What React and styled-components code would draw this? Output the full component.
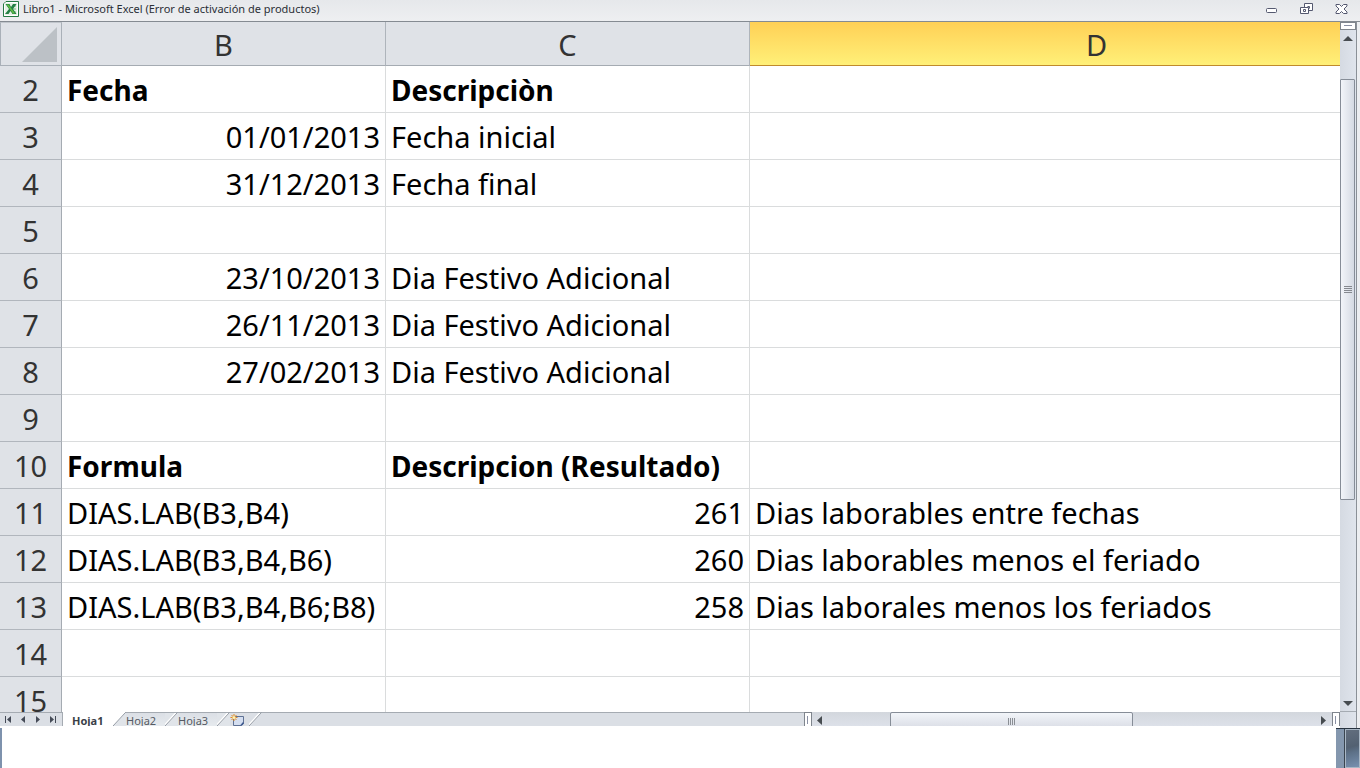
import React from 'react';
import styled, { createGlobalStyle } from 'styled-components';

const GlobalStyle = createGlobalStyle`
  * { box-sizing: border-box; }
  html, body { margin: 0; background: #fff; }
  button { font: inherit; padding: 0; border: 0; background: none; color: inherit; }
`;

const Window = styled.div`
  display: flex;
  flex-direction: column;
  height: 100vh;
  overflow: hidden;
  font-family: "Noto Sans", "Open Sans", sans-serif;
  color: #000;
`;

const TitleBar = styled.header`
  display: flex;
  align-items: center;
  flex: none;
  height: 22px;
  padding: 0 11px 3px 3px;
  border-bottom: 1px solid #858b92;
  background: linear-gradient(#e6e8eb, #eeeff1);
`;

const Title = styled.h1`
  flex: 1;
  margin: 0 0 0 4px;
  font-size: 11px;
  line-height: 16px;
  font-weight: 400;
  color: #2b2f36;
  white-space: nowrap;
`;

const WindowControls = styled.div`
  display: flex;
  gap: 20px;
`;

const ControlButton = styled.button`
  display: grid;
  place-items: center;
  width: 15px;
  height: 14px;
`;

const Workspace = styled.main`
  display: flex;
  flex: 1;
  min-height: 0;
`;

const SheetColumn = styled.div`
  display: flex;
  flex-direction: column;
  flex: 1;
  min-width: 0;
  padding-bottom: 2px;
`;

const SheetViewport = styled.div`
  flex: 1;
  min-height: 0;
  overflow: hidden;
`;

const Sheet = styled.table`
  width: max(100%, 1444px);
  table-layout: fixed;
  border-collapse: separate;
  border-spacing: 0;
`;

const Col = styled.col`
  width: ${(p) => (p.$width ? `${p.$width}px` : 'auto')};
`;

const ColumnHeader = styled.th`
  height: 44px;
  padding: 2px 0 0;
  font-size: 29px;
  line-height: 40px;
  font-weight: 400;
  color: #333;
  border-right: 1px solid ${(p) => (p.$active ? '#ffe56b' : '#aeb4bb')};
  border-bottom: 1px solid ${(p) => (p.$active ? '#c08a2c' : '#a5abb2')};
  background: ${(p) => (p.$active ? 'linear-gradient(#ffd056, #fff078)' : '#dfe2e7')};
`;

const Corner = styled.td`
  height: 44px;
  padding: 4px 4px 3px 0;
  border: 1px solid #a9b0b8;
  border-top-color: #c0c5cb;
  background: #dfe2e7;
  line-height: 0;
  text-align: right;
`;

const RowHeader = styled.th`
  height: 47px;
  padding: 2px 0 0;
  font-size: 29px;
  line-height: 42px;
  font-weight: 400;
  color: #333;
  border-right: 1px solid #a5abb2;
  border-bottom: 1px solid #b1b6bd;
  background: #dfe2e7;
`;

const Cell = styled.td`
  height: 47px;
  padding: 2px 5px 0;
  font-size: ${(p) => (p.$bold ? 28 : 29)}px;
  line-height: 42px;
  font-weight: ${(p) => (p.$bold ? 700 : 400)};
  text-align: ${(p) => (p.$right ? 'right' : 'left')};
  white-space: nowrap;
  border-right: 1px solid #dadcdd;
  border-bottom: 1px solid #dadcdd;

  &:last-child { border-right: 0; }
`;

const BottomBar = styled.div`
  display: flex;
  flex: none;
  height: 14px;
  overflow: hidden;
  background: #dbdfe5;
`;

const SheetNav = styled.div`
  display: flex;
  align-items: center;
  justify-content: center;
  gap: 6px;
  width: 63px;
  border-top: 1px solid #a5abb2;
  border-right: 1px solid #a5abb2;
`;

const NavButton = styled.button`
  display: flex;
  width: 9px;
  height: 9px;
`;

const Tabs = styled.nav`
  display: flex;
  flex: 1;
`;

const Tab = styled.button`
  flex: none;
  width: ${(p) => (p.$active ? 50 : 39)}px;
  padding-left: ${(p) => (p.$active ? 9 : 0)}px;
  font-size: 11px;
  line-height: 16px;
  font-weight: ${(p) => (p.$active ? 700 : 400)};
  text-align: left;
  color: ${(p) => (p.$active ? '#3b3f48' : '#555a63')};
  border-top: 1px solid ${(p) => (p.$active ? '#fff' : '#a5abb2')};
  background: ${(p) => (p.$active ? '#fff' : 'linear-gradient(#dbdfe5, #e6eaee)')};
`;

const NewTab = styled.button`
  flex: none;
  width: 19px;
  border-top: 1px solid #a5abb2;
  line-height: 0;
  text-align: left;
`;

const TabFiller = styled.div`
  flex: 1;
  border-top: 1px solid #a5abb2;
`;

const SlantSvg = styled.svg`
  flex: none;
  width: 13px;
  height: 14px;
`;

const Splitter = styled.div`
  flex: none;
  width: 8px;
  height: 16px;
  border: 1px solid #7f858d;
  background: #fff;
  padding: 3px 2px;

  &::before {
    content: "";
    display: block;
    height: 8px;
    border-left: 1px solid #8a90a4;
  }
`;

const HorizontalScroll = styled.div`
  display: flex;
  flex: none;
  width: 536px;
  background: linear-gradient(#d3d7dd, #dde1e9);
`;

const ArrowButton = styled.button`
  display: grid;
  place-items: center;
  flex: none;
  width: ${(p) => (p.$horizontal ? 15 : 16)}px;
  height: ${(p) => (p.$horizontal ? 15 : 16)}px;
`;

const HorizontalTrack = styled.div`
  flex: 1;
  padding-left: 63px;
`;

const HorizontalThumb = styled.div`
  display: flex;
  justify-content: center;
  align-items: center;
  gap: 1px;
  width: 243px;
  height: 18px;
  border: 1px solid #868d97;
  border-radius: 2px;
  background: linear-gradient(#f2f5f9, #d8dbe4);
`;

const HorizontalGrip = styled.i`
  width: 1px;
  height: 7px;
  background: #8a8e94;
`;

const VerticalScroll = styled.aside`
  display: flex;
  flex-direction: column;
  flex: none;
  width: 20px;
  padding-right: 1px;
  background: #eceef1;
`;

const VerticalInner = styled.div`
  display: flex;
  flex-direction: column;
  flex: 1;
  width: 17px;
  border-right: 1px solid #8a9097;
  background: linear-gradient(90deg, #d5dae2, #dfe4ec);
`;

const SplitHandle = styled.div`
  flex: none;
  height: 8px;
  padding: 2px 3px;
  border: 1px solid #7f858d;
  background: #fff;

  &::before {
    content: "";
    display: block;
    border-top: 1px solid #8a90a4;
  }
`;

const VerticalTrack = styled.div`
  flex: 1;
  padding-top: 33px;
`;

const VerticalThumb = styled.div`
  display: flex;
  flex-direction: column;
  justify-content: center;
  align-items: center;
  gap: 1px;
  width: 15px;
  height: 421px;
  border: 1px solid #868d97;
  border-radius: 1px;
  background: linear-gradient(90deg, #f2f5f9, #d5dae3);
`;

const VerticalGrip = styled.i`
  width: 8px;
  height: 1px;
  background: #85898f;
`;

const ScrollCorner = styled.div`
  flex: none;
  height: 17px;
  border-top: 1px solid #a5abb2;
`;

const DesktopStrip = styled.footer`
  display: flex;
  justify-content: space-between;
  flex: none;
  height: 40px;
  border-left: 2px solid #7e92ad;
  background: #fff;
`;

const TaskbarEnd = styled.div`
  display: flex;
  width: 24px;
  padding-left: 9px;
  border-top: 1px solid #26323f;
  background: #8497ae;
`;

const ShowDesktop = styled.button`
  flex: 1;
  border: 1px solid #a9b7c5;
  box-shadow: -1px 0 0 #39444f;
  background: linear-gradient(165deg, #626e7e 0%, #536172 45%, #5d7188 60%, #7890af 100%);
`;

const ExcelIcon = () => (
  <svg width="16" height="16" viewBox="0 0 16 16" aria-hidden="true">
    <path d="M3 .5h12.5v15H.5V3z" fill="#e6f1e4" stroke="#267a43" />
    <path d="M3 1.5h11.5v13h-13V3z" fill="none" stroke="#fff" />
    <path d="M10 5h3M10 8h3M10 11h3" stroke="#78b884" />
    <path d="M2.5 3h4L8 6l2-3h3.5L10 8l3.5 5h-4l-2-3-2 3H2l4-5z" fill="#238044" />
    <path d="M3.5 3.5h2L12 12.500h-2z" fill="#63bd45" />
  </svg>
);

const MinimizeIcon = () => (
  <svg width="13" height="14" viewBox="0 0 13 14" aria-hidden="true">
    <rect x="1.5" y="6.5" width="10" height="4" rx="1" fill="#fff" stroke="#555970" />
  </svg>
);

const RestoreIcon = () => (
  <svg width="13" height="14" viewBox="0 0 13 14" aria-hidden="true">
    <path d="M4.5 1.5h8v7h-8z" fill="#fff" stroke="#555970" />
    <path d="M7.5 4.5h2v2" fill="none" stroke="#555970" />
    <path d="M.5 5.500h8v6h-8z" fill="#fff" stroke="#555970" />
    <path d="M3.5 7.500h2v2h-2z" fill="#fff" stroke="#555970" />
  </svg>
);

const CloseIcon = () => (
  <svg width="13" height="14" viewBox="0 0 13 14" aria-hidden="true">
    <path d="M1 2.500h3.500l2 2 2-2H12V4L9 7l3 3v1.500H8.500l-2-2-2 2H1V10l3-3-3-3z" fill="#fff" stroke="#555970" />
  </svg>
);

const NAV_SHAPES = {
  first: 'M1 1h1v7H1zM7 1v7L3 4.500z',
  previous: 'M6 1v7L2 4.500z',
  next: 'M2 1v7l4-3.500z',
  last: 'M1 1v7l4-3.500zM6 1h1v7H6z',
};

const NavIcon = ({ kind }) => (
  <svg width="9" height="9" viewBox="0 0 9 9" aria-hidden="true">
    <path d={NAV_SHAPES[kind]} fill="#454b57" />
  </svg>
);

const ARROWS = {
  up: 'M0 8l5-5 5 5z',
  down: 'M0 3l5 5 5-5z',
  left: 'M7 1v9L2 5.500z',
  right: 'M1 1v9l5-4.500z',
};

const Arrow = ({ kind }) => (
  <svg width="10" height="10" viewBox="0 0 10 10" aria-hidden="true">
    <path d={ARROWS[kind]} fill="#474c50" />
  </svg>
);

const Slant = ({ active, end }) => (
  <SlantSvg viewBox="0 0 13 14" aria-hidden="true">
    <path d="M0 0h13v14H0z" fill={end ? '#dbdfe5' : '#e0e4e9'} />
    {active && <path d="M0 0h13L0 14z" fill="#fff" />}
    <path d="M0 13L12 0" stroke="#fff" strokeWidth="2" />
    <path d={active ? 'M12 .500H13' : 'M0 .500h13'} stroke="#a5abb2" />
    <path d="M0 14L12.500 .500" stroke="#9299a3" />
  </SlantSvg>
);

const NewSheetIcon = () => (
  <svg width="16" height="13" viewBox="0 0 16 13" aria-hidden="true">
    <path d="M3.500 3.500h10v7l-2 2h-8z" fill="#d4def0" stroke="#5f7194" />
    <path d="M13 9l-3 3.500h2l2-2z" fill="#3f5b91" />
    <path d="M4 1v7M.500 4.500h7M1.500 2l5 5M6.500 2l-5 5" stroke="#e38b22" />
    <circle cx="4" cy="4.500" r="1.500" fill="#fff3b0" />
  </svg>
);

const rows = [
  { n: 2, b: 'Fecha', c: 'Descripciòn', bold: true },
  { n: 3, b: '01/01/2013', c: 'Fecha inicial', date: true },
  { n: 4, b: '31/12/2013', c: 'Fecha final', date: true },
  { n: 5 },
  { n: 6, b: '23/10/2013', c: 'Dia Festivo Adicional', date: true },
  { n: 7, b: '26/11/2013', c: 'Dia Festivo Adicional', date: true },
  { n: 8, b: '27/02/2013', c: 'Dia Festivo Adicional', date: true },
  { n: 9 },
  { n: 10, b: 'Formula', c: 'Descripcion (Resultado)', bold: true },
  { n: 11, b: 'DIAS.LAB(B3,B4)', c: '261', d: 'Dias laborables entre fechas' },
  { n: 12, b: 'DIAS.LAB(B3,B4,B6)', c: '260', d: 'Dias laborables menos el feriado' },
  { n: 13, b: 'DIAS.LAB(B3,B4,B6;B8)', c: '258', d: 'Dias laborales menos los feriados' },
  { n: 14 },
  { n: 15 },
];

const navButtons = [
  ['first', 'Primera hoja'],
  ['previous', 'Hoja anterior'],
  ['next', 'Hoja siguiente'],
  ['last', 'Última hoja'],
];

export default function App() {
  return (
    <Window>
      <GlobalStyle />
      <TitleBar>
        <ExcelIcon />
        <Title>Libro1 - Microsoft Excel (Error de activación de productos)</Title>
        <WindowControls>
          <ControlButton aria-label="Minimizar"><MinimizeIcon /></ControlButton>
          <ControlButton aria-label="Restaurar"><RestoreIcon /></ControlButton>
          <ControlButton aria-label="Cerrar"><CloseIcon /></ControlButton>
        </WindowControls>
      </TitleBar>
      <Workspace>
        <SheetColumn>
          <SheetViewport>
            <Sheet>
              <colgroup>
                <Col $width={62} />
                <Col $width={324} />
                <Col $width={364} />
                <Col />
              </colgroup>
              <thead>
                <tr>
                  <Corner>
                    <svg width="35" height="35" viewBox="0 0 35 35" aria-hidden="true">
                      <path d="M35 0v35H0z" fill="#bcc1c6" />
                    </svg>
                  </Corner>
                  <ColumnHeader scope="col">B</ColumnHeader>
                  <ColumnHeader scope="col">C</ColumnHeader>
                  <ColumnHeader scope="col" $active>D</ColumnHeader>
                </tr>
              </thead>
              <tbody>
                {rows.map((r) => (
                  <tr key={r.n}>
                    <RowHeader scope="row">{r.n}</RowHeader>
                    <Cell $bold={r.bold} $right={r.date}>{r.b}</Cell>
                    <Cell $bold={r.bold} $right={Boolean(r.d)}>{r.c}</Cell>
                    <Cell>{r.d}</Cell>
                  </tr>
                ))}
              </tbody>
            </Sheet>
          </SheetViewport>
          <BottomBar>
            <SheetNav>
              {navButtons.map(([kind, label]) => (
                <NavButton key={kind} aria-label={label}><NavIcon kind={kind} /></NavButton>
              ))}
            </SheetNav>
            <Tabs>
              <Tab $active>Hoja1</Tab>
              <Slant active />
              <Tab>Hoja2</Tab>
              <Slant />
              <Tab>Hoja3</Tab>
              <Slant />
              <NewTab aria-label="Insertar hoja"><NewSheetIcon /></NewTab>
              <Slant end />
              <TabFiller />
            </Tabs>
            <HorizontalScroll>
              <Splitter />
              <ArrowButton $horizontal aria-label="Desplazar a la izquierda"><Arrow kind="left" /></ArrowButton>
              <HorizontalTrack>
                <HorizontalThumb>
                  <HorizontalGrip /><HorizontalGrip /><HorizontalGrip /><HorizontalGrip />
                </HorizontalThumb>
              </HorizontalTrack>
              <ArrowButton $horizontal aria-label="Desplazar a la derecha"><Arrow kind="right" /></ArrowButton>
              <Splitter />
            </HorizontalScroll>
          </BottomBar>
        </SheetColumn>
        <VerticalScroll>
          <VerticalInner>
            <SplitHandle />
            <ArrowButton aria-label="Desplazar hacia arriba"><Arrow kind="up" /></ArrowButton>
            <VerticalTrack>
              <VerticalThumb>
                <VerticalGrip /><VerticalGrip /><VerticalGrip /><VerticalGrip />
              </VerticalThumb>
            </VerticalTrack>
            <ArrowButton aria-label="Desplazar hacia abajo"><Arrow kind="down" /></ArrowButton>
            <ScrollCorner />
          </VerticalInner>
        </VerticalScroll>
      </Workspace>
      <DesktopStrip>
        <span />
        <TaskbarEnd><ShowDesktop aria-label="Mostrar escritorio" /></TaskbarEnd>
      </DesktopStrip>
    </Window>
  );
}
